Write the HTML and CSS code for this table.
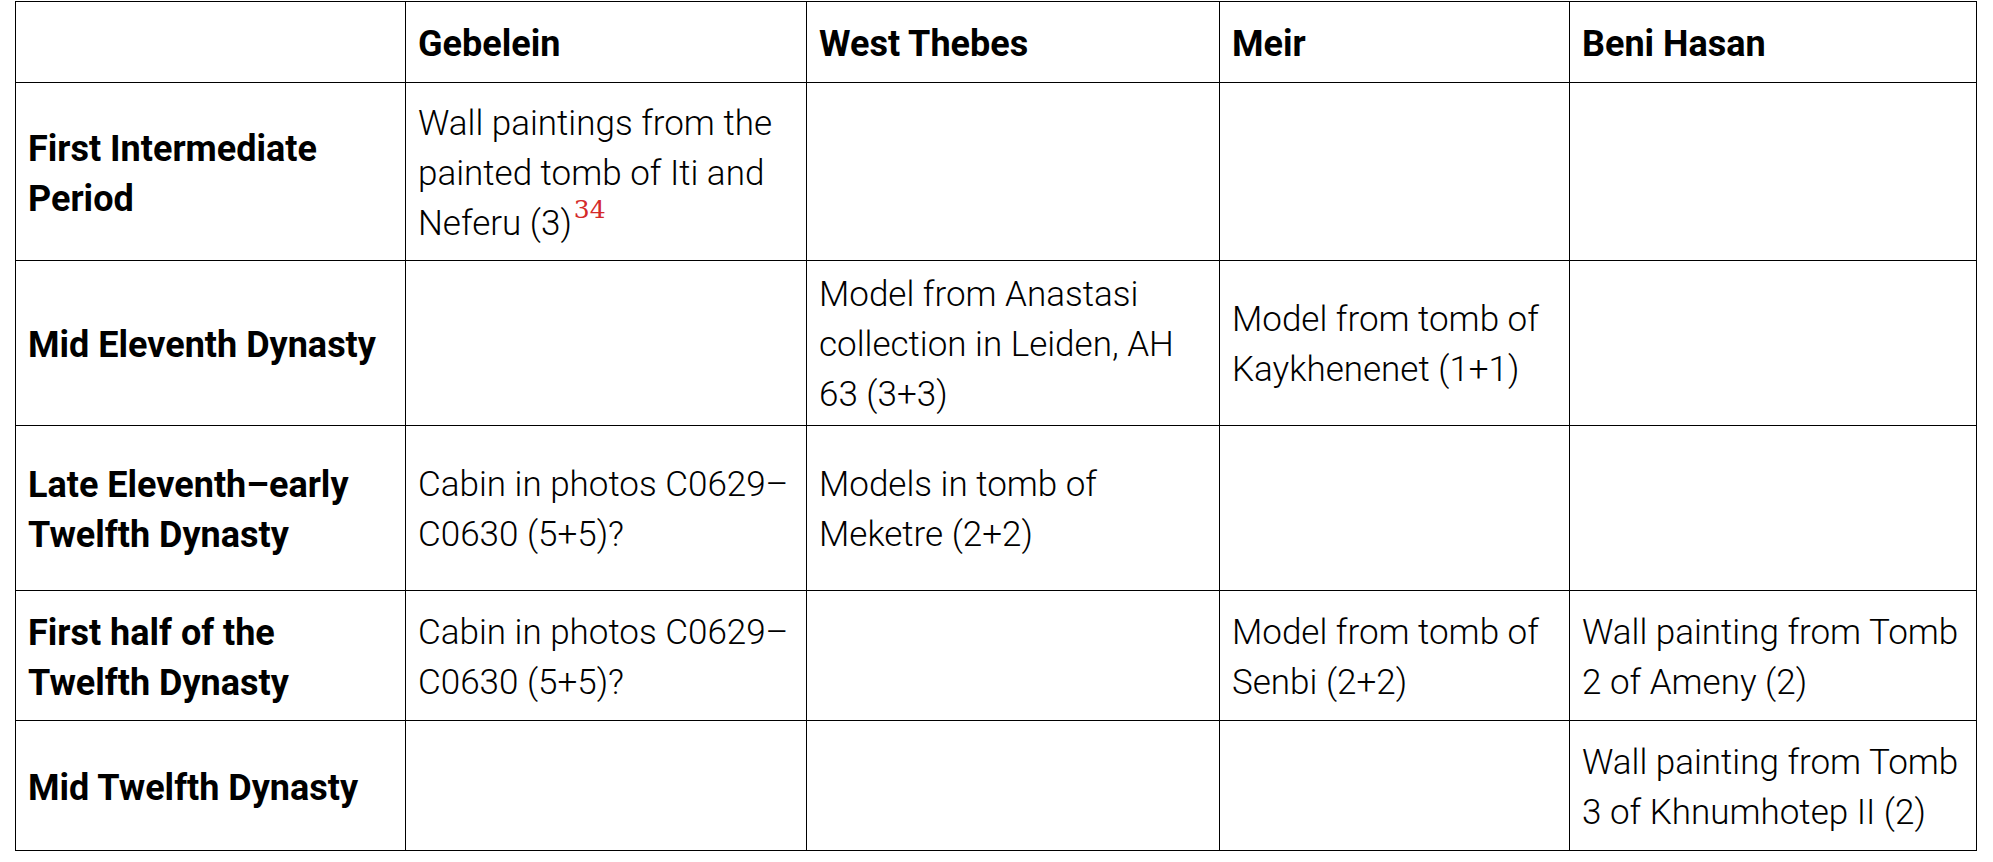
FILE: index.html
```html
<!DOCTYPE html>
<html lang="en">
<head>
<meta charset="utf-8">
<title>Boat models and paintings</title>
<link rel="stylesheet" href="styles.css">
</head>
<body>
<main class="page">
  <table class="sites">
    <colgroup>
      <col class="c-period">
      <col class="c-gebelein">
      <col class="c-thebes">
      <col class="c-meir">
      <col class="c-beni">
    </colgroup>
    <thead>
      <tr class="r-head">
        <th></th>
        <th>Gebelein</th>
        <th>West Thebes</th>
        <th>Meir</th>
        <th>Beni Hasan</th>
      </tr>
    </thead>
    <tbody>
      <tr class="r-1">
        <th>First Intermediate<br>Period</th>
        <td>Wall paintings from the<br>painted tomb of Iti and<br>Neferu (3)<sup class="fn">34</sup></td>
        <td></td>
        <td></td>
        <td></td>
      </tr>
      <tr class="r-2">
        <th>Mid Eleventh Dynasty</th>
        <td></td>
        <td>Model from Anastasi<br>collection in Leiden, AH<br>63 (3+3)</td>
        <td>Model from tomb of<br>Kaykhenenet (1+1)</td>
        <td></td>
      </tr>
      <tr class="r-3">
        <th>Late Eleventh–early<br>Twelfth Dynasty</th>
        <td>Cabin in photos C0629–<br>C0630 (5+5)?</td>
        <td>Models in tomb of<br>Meketre (2+2)</td>
        <td></td>
        <td></td>
      </tr>
      <tr class="r-4">
        <th>First half of the<br>Twelfth Dynasty</th>
        <td>Cabin in photos C0629–<br>C0630 (5+5)?</td>
        <td></td>
        <td>Model from tomb of<br>Senbi (2+2)</td>
        <td>Wall painting from Tomb<br>2 of Ameny (2)</td>
      </tr>
      <tr class="r-5">
        <th>Mid Twelfth Dynasty</th>
        <td></td>
        <td></td>
        <td></td>
        <td>Wall painting from Tomb<br>3 of Khnumhotep II (2)</td>
      </tr>
    </tbody>
  </table>
</main>
</body>
</html>
```

FILE: styles.css
```css
html, body {
  margin: 0;
  padding: 0;
  background: #ffffff;
}

.page {
  padding: 1px 0 0 15px;
}

.sites {
  border-collapse: collapse;
  table-layout: fixed;
  width: 1961px;
  font-family: Roboto, "Liberation Sans", sans-serif;
  color: #000;
}

.c-period { width: 390px; }
.c-gebelein { width: 401px; }
.c-thebes { width: 413px; }
.c-meir { width: 350px; }
.c-beni { width: 407px; }

.sites th,
.sites td {
  border: 1px solid #000;
  padding: 4px 12px 0;
  text-align: left;
  vertical-align: middle;
  white-space: nowrap;
  line-height: 50px;
}

.sites th {
  font-size: 36px;
  font-weight: 700;
}

.sites td {
  font-size: 35px;
  font-weight: 300;
}

.r-head th { height: 76px; }
.r-1 > * { height: 173px; }
.r-2 > * { height: 160px; }
.r-3 > * { height: 160px; }
.r-4 > * { height: 125px; }
.r-5 > * { height: 125px; }

.fn {
  font-family: "DejaVu Serif", serif;
  font-size: 25px;
  font-weight: 400;
  color: #d42a2a;
  line-height: 0;
  vertical-align: 17px;
  margin-left: 2px;
}
```
